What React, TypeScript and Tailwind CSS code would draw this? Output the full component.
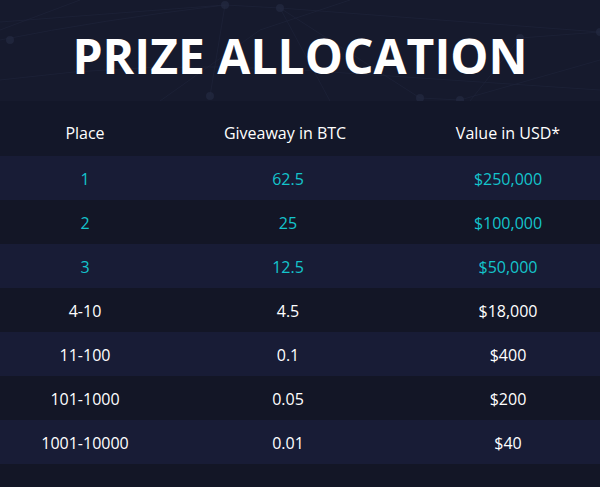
const rows = [
  { place: "1", btc: "62.5", usd: "$250,000", top: true },
  { place: "2", btc: "25", usd: "$100,000", top: true },
  { place: "3", btc: "12.5", usd: "$50,000", top: true },
  { place: "4-10", btc: "4.5", usd: "$18,000", top: false },
  { place: "11-100", btc: "0.1", usd: "$400", top: false },
  { place: "101-1000", btc: "0.05", usd: "$200", top: false },
  { place: "1001-10000", btc: "0.01", usd: "$40", top: false },
];

function Network() {
  // faint node-and-line backdrop behind the title
  const dots: [number, number][] = [
    [225, 5], [280, 8], [420, 98], [460, 100], [210, 96], [600, 32], [520, 38], [10, 40],
  ];
  return (
    <svg className="absolute inset-0 h-full w-full" viewBox="0 0 600 101" preserveAspectRatio="none">
      <g stroke="#242a42" strokeWidth="0.7" fill="none" opacity="0.6">
        <path d="M0 22 L225 5 L280 8 L600 32" />
        <path d="M225 5 L210 96" />
        <path d="M280 8 L420 98" />
        <path d="M280 8 L330 101" />
        <path d="M420 98 L460 100 L600 60" />
        <path d="M520 38 L600 32" />
        <path d="M0 80 Q150 60 300 70 T600 90" />
        <path d="M0 40 Q100 20 225 5" />
        <path d="M80 0 L0 30" />
        <path d="M160 101 L260 30 L350 0" />
        <path d="M520 38 L470 101" />
      </g>
      <g fill="#242a42" opacity="0.7">
        {dots.map(([x, y], i) => (
          <circle key={i} cx={x} cy={y} r="4" />
        ))}
      </g>
    </svg>
  );
}

export default function App() {
  return (
    <div
      className="w-[600px] h-[487px] bg-[#131626] text-white overflow-hidden"
      style={{ fontFamily: '"Open Sans", sans-serif' }}
    >
      <div className="relative h-[101px] bg-[#161a2d] flex items-center justify-center">
        <Network />
        <h1 className="relative text-[48px] font-bold leading-none pt-[10px]">
          PRIZE ALLOCATION
        </h1>
      </div>
      <div className="grid grid-cols-[170px_226px_1fr] h-[55px] items-center bg-[#131729] text-[16px] pt-[9px]">
        <div className="text-center">Place</div>
        <div className="text-center pl-[4px]">Giveaway in BTC</div>
        <div className="text-center pl-5">Value in USD*</div>
      </div>
      {rows.map((r, i) => (
        <div
          key={r.place}
          className={
            "grid grid-cols-[170px_226px_1fr] h-[44px] items-center text-[16px] pt-[2px] " +
            (i % 2 === 0 ? "bg-[#181c36] " : "bg-[#131626] ") +
            (r.top ? "text-[#14c4cc]" : "text-white")
          }
        >
          <div className="text-center">{r.place}</div>
          <div className="text-center pl-[10px]">{r.btc}</div>
          <div className="text-center pl-5">{r.usd}</div>
        </div>
      ))}
    </div>
  );
}
